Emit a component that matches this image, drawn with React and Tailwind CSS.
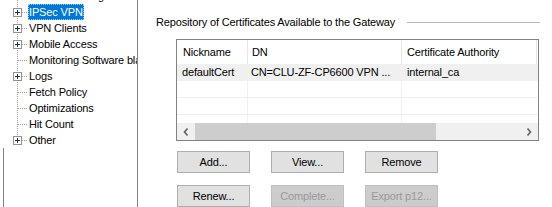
import React from "react";

const TREE_ITEMS = [
  { label: "Network Management", expandable: false },
  { label: "IPSec VPN", expandable: true, selected: true },
  { label: "VPN Clients", expandable: true },
  { label: "Mobile Access", expandable: true },
  { label: "Monitoring Software blade", expandable: false },
  { label: "Logs", expandable: true },
  { label: "Fetch Policy", expandable: false },
  { label: "Optimizations", expandable: false },
  { label: "Hit Count", expandable: false },
  { label: "Other", expandable: true, last: true },
];

const CERTS = [
  { nickname: "defaultCert", dn: "CN=CLU-ZF-CP6600 VPN ...", ca: "internal_ca" },
];

const TreeGlyph = ({ expandable, last }) => (
  <svg width="28" height="16" className="shrink-0">
    <line
      x1="17.5"
      y1="0"
      x2="17.5"
      y2={last ? 8 : 16}
      stroke="#a0a0a0"
      strokeDasharray="1 1"
    />
    <line
      x1={expandable ? 22 : 18}
      y1="8.5"
      x2="28"
      y2="8.5"
      stroke="#a0a0a0"
      strokeDasharray="1 1"
    />
    {expandable && (
      <g>
        <rect x="13.5" y="4.5" width="8" height="8" fill="#fff" stroke="#919191" />
        <line x1="15" y1="8.5" x2="20" y2="8.5" stroke="#1c2b5a" />
        <line x1="17.5" y1="6" x2="17.5" y2="11" stroke="#1c2b5a" />
      </g>
    )}
  </svg>
);

const TreeRow = ({ item }) => (
  <div className="flex h-[16px] items-center whitespace-nowrap">
    <TreeGlyph expandable={item.expandable} last={item.last} />
    <span
      className={`h-[16px] leading-[16px] px-[1px] ${
        item.selected
          ? "bg-[#0078d7] text-white outline outline-1 outline-dotted outline-[#99c9ef] -outline-offset-1"
          : "text-black"
      }`}
    >
      {item.label}
    </span>
  </div>
);

const Chevron = ({ dir }) => (
  <svg width="6" height="8" viewBox="0 0 6 8">
    <polyline
      points={dir === "left" ? "4.5,0.5 1.5,4 4.5,7.5" : "1.5,0.5 4.5,4 1.5,7.5"}
      fill="none"
      stroke="#606060"
      strokeWidth="1.6"
    />
  </svg>
);

const WinButton = ({ children, disabled }) => (
  <button
    type="button"
    disabled={disabled}
    className={`w-[73px] h-[22px] border text-[11px] tracking-[-0.15px] leading-none ${
      disabled
        ? "bg-[#cccccc] border-[#bfbfbf] text-[#9a9a9a]"
        : "bg-[#e1e1e1] border-[#adadad] text-black"
    }`}
  >
    {children}
  </button>
);

const App = () => {
  return (
    <div
      className="flex w-[552px] h-[207px] overflow-hidden bg-white text-[11px] tracking-[-0.15px] text-black"
      style={{ fontFamily: '"Liberation Sans", Arial, sans-serif' }}
    >
      {/* tree */}
      <div className="flex flex-col w-[138px] shrink-0 border-r border-[#828282] overflow-hidden">
        <div className="mt-[-12px]">
          {TREE_ITEMS.map((item) => (
            <TreeRow key={item.label} item={item} />
          ))}
        </div>
        <div className="flex-1 ml-[3px] border-l border-[#828282]" />
      </div>

      {/* right side */}
      <div className="flex flex-col flex-1 pt-[16px]">
        <div className="flex items-center h-[13px] pl-[18px] pr-[12px]">
          <span className="whitespace-nowrap leading-[13px]">
            Repository of Certificates Available to the Gateway
          </span>
          <div className="flex-1 h-px ml-[12px] bg-[#b9b9b9]" />
        </div>

        <div className="ml-[38px] mt-[10px] w-[363px] h-[102px] border border-[#828282] flex flex-col">
          <div className="flex h-[24px] items-center">
            <div className="w-[71px] h-full pl-[6px] flex items-center border-r border-[#e5e5e5]">
              Nickname
            </div>
            <div className="w-[154px] h-full pl-[4px] flex items-center border-r border-[#e5e5e5]">
              DN
            </div>
            <div className="w-[135px] h-full pl-[5px] flex items-center border-r border-[#e5e5e5]">
              Certificate Authority
            </div>
          </div>
          {CERTS.map((c) => (
            <div key={c.nickname} className="flex h-[17px] bg-[#f0f0f0]">
              <div className="w-[71px] pl-[5px] flex items-center border-r border-[#f0f0f0] whitespace-nowrap">
                {c.nickname}
              </div>
              <div className="w-[154px] pl-[3px] flex items-center border-r border-[#f0f0f0] whitespace-nowrap">
                {c.dn}
              </div>
              <div className="w-[135px] pl-[5px] flex items-center whitespace-nowrap">
                {c.ca}
              </div>
            </div>
          ))}
          {[17, 17, 8].map((h, i) => (
            <div
              key={i}
              className={`flex ${h === 17 ? "h-[17px] border-b border-[#f0f0f0]" : "h-[8px]"}`}
            >
              <div className="w-[71px] border-r border-[#f0f0f0]" />
              <div className="w-[154px] border-r border-[#f0f0f0]" />
              <div className="w-[135px]" />
            </div>
          ))}
          <div className="flex h-[17px] bg-[#f0f0f0] items-stretch">
            <div className="w-[18px] flex items-center justify-center">
              <Chevron dir="left" />
            </div>
            <div className="w-[241px] bg-[#cdcdcd]" />
            <div className="flex-1" />
            <div className="w-[18px] flex items-center justify-center">
              <Chevron dir="right" />
            </div>
          </div>
        </div>

        <div className="flex flex-col gap-[12px] mt-[10px] ml-[39px]">
          <div className="flex gap-[21px]">
            <WinButton>Add...</WinButton>
            <WinButton>View...</WinButton>
            <WinButton>Remove</WinButton>
          </div>
          <div className="flex gap-[21px]">
            <WinButton>Renew...</WinButton>
            <WinButton disabled>Complete...</WinButton>
            <WinButton disabled>Export p12...</WinButton>
          </div>
        </div>
      </div>
    </div>
  );
};

export default App;
